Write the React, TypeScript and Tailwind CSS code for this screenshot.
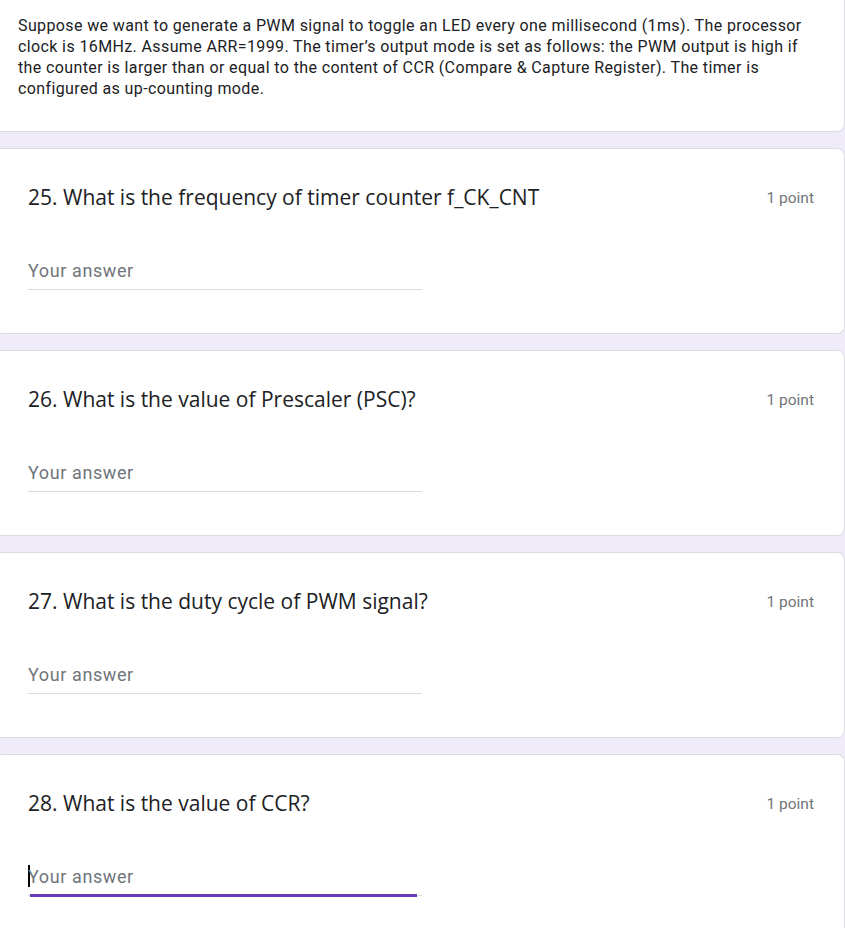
const questions = [
  "25. What is the frequency of timer counter f_CK_CNT",
  "26. What is the value of Prescaler (PSC)?",
  "27. What is the duty cycle of PWM signal?",
  "28. What is the value of CCR?",
];

function QuestionCard({ title, focused }: { title: string; focused?: boolean }) {
  return (
    <div className="-ml-[7px] bg-white border border-[#dadce0] rounded-lg pt-[37px] pb-[43px] pl-[34px] pr-[30px]">
      <div className="flex flex-row items-center justify-between h-[24px]">
        <p className="text-[21px] text-[#202124] font-['Open_Sans',sans-serif] whitespace-nowrap">{title}</p>
        <span className="text-[15.5px] text-[#70757a] font-['Roboto',sans-serif] mt-[2px]">1 point</span>
      </div>
      <div className="mt-[48px] w-[394px] relative border-b border-[#dadce0] pb-[7px]">
        <div className="flex flex-row items-center h-[24px]">
          {focused && <span className="w-[2px] h-[22px] bg-black mr-[-2px]" />}
          <span className="text-[18px] tracking-[0.6px] text-[#70757a] font-['Roboto',sans-serif]">Your answer</span>
        </div>
        {focused && (
          <div className="absolute left-[2px] right-[5px] bottom-[-2px] h-[3px] bg-[#673ab7]" />
        )}
      </div>
    </div>
  );
}

export default function App() {
  return (
    <div className="min-h-[928px] w-[845px] bg-[#f0ebf8] overflow-hidden flex flex-col gap-[16px] font-['Roboto',sans-serif]">
      <div className="-ml-[7px] bg-white border border-t-0 border-[#dadce0] rounded-b-lg pt-[15px] pb-[32px] pl-[24px] pr-[30px]">
        <p className="text-[16px] leading-[21px] tracking-[0.38px] text-[#202124]">
          Suppose we want to generate a PWM signal to toggle an LED every one millisecond (1ms). The processor clock
          is 16MHz. Assume ARR=1999. The timer’s output mode is set as follows: the PWM output is high if the counter
          is larger than or equal to the content of CCR (Compare &amp; Capture Register). The timer is configured as
          up-counting mode.
        </p>
      </div>
      {questions.map((q, i) => (
        <QuestionCard key={q} title={q} focused={i === questions.length - 1} />
      ))}
    </div>
  );
}
